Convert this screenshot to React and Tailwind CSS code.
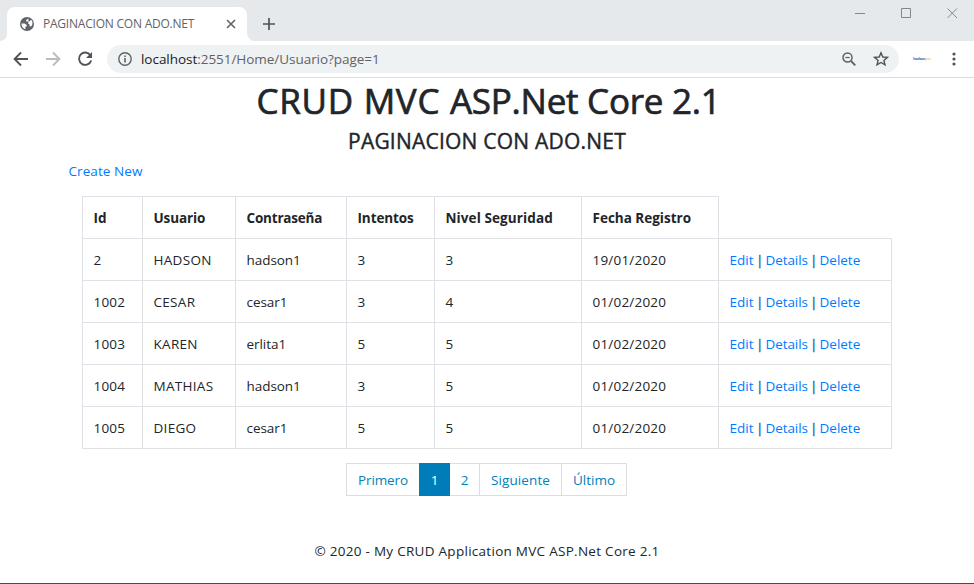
import React from "react";

const users = [
  ["2", "HADSON", "hadson1", "3", "3", "19/01/2020"],
  ["1002", "CESAR", "cesar1", "3", "4", "01/02/2020"],
  ["1003", "KAREN", "erlita1", "5", "5", "01/02/2020"],
  ["1004", "MATHIAS", "hadson1", "3", "5", "01/02/2020"],
  ["1005", "DIEGO", "cesar1", "5", "5", "01/02/2020"],
];

const columns = [
  ["Id", "tracking-[0px]"],
  ["Usuario", "tracking-[-0.1px]"],
  ["Contraseña", "tracking-[-0.2px]"],
  ["Intentos", "tracking-[-0.1px]"],
  ["Nivel Seguridad", "tracking-[0.1px]"],
  ["Fecha Registro", "tracking-[0px]"],
];

const cellTracking = [
  "tracking-[0.2px]",
  "tracking-[0.3px]",
  "tracking-[-0.05px]",
  "",
  "",
  "tracking-[0.2px]",
];

function TabStrip() {
  return (
    <div className="flex h-[41px] items-end bg-[#e5e9ec]">
      <div className="h-2 w-[7px] bg-white">
        <div className="h-full w-full rounded-br-lg bg-[#e5e9ec]" />
      </div>
      <div className="flex h-[34px] w-[240px] items-center rounded-t-lg bg-white pl-[13px] pr-[11px]">
        <svg className="h-[14px] w-[14px] shrink-0" viewBox="0 0 14 14">
          <circle cx="7" cy="7" r="7" fill="#5f6368" />
          <path d="M1.500 6.500h3.200l2 1.600v1.300H5.400v2.900C3 11.800 1.300 9.500 1.500 6.500Z" fill="#fff" />
          <path d="M8.400 1.500 6.200 3v1.600h2.200v1.700H7.600l2 1.300v1.700h1.800c1.700-2 1.500-5-.3-6.500L9.600 4.200H8.400Z" fill="#fff" />
        </svg>
        <span className="ml-[9px] whitespace-nowrap text-[12px] tracking-[-0.22px] text-[#5f6368]">PAGINACION CON ADO.NET</span>
        <svg className="ml-auto h-[10px] w-[10px] shrink-0" viewBox="0 0 10 10" stroke="#5f6368" strokeWidth="1.600">
          <path d="M1 1l8 8M9 1L1 9" />
        </svg>
      </div>
      <div className="h-2 w-2 bg-white">
        <div className="h-full w-full rounded-bl-lg bg-[#e5e9ec]" />
      </div>
      <svg className="mb-[11px] ml-2 h-3 w-3" viewBox="0 0 12 12" stroke="#4f5357" strokeWidth="1.700">
        <path d="M6 0v12M0 6h12" />
      </svg>
      <div className="mb-[22px] ml-auto mr-4 flex items-center gap-[35px]">
        <svg className="h-[11px] w-[11px]" viewBox="0 0 11 11" stroke="#85888b"><path d="M0 5.500h10" /></svg>
        <svg className="h-[11px] w-[11px]" viewBox="0 0 11 11" stroke="#85888b" fill="none"><path d="M.5.5h9v9h-9z" /></svg>
        <svg className="h-[11px] w-[11px]" viewBox="0 0 11 11" stroke="#85888b"><path d="M.5.5l9.500 9.500M10 .5l-9.500 9.500" /></svg>
      </div>
    </div>
  );
}

function Toolbar() {
  return (
    <div className="flex h-[37px] items-center border-b border-[#d9dbdf] bg-white pl-[13px] pr-[18px]">
      <svg className="h-4 w-4" viewBox="0 0 16 16" fill="none" stroke="#505458" strokeWidth="1.900">
        <path d="M15 8H2M8 1.500 1.600 8 8 14.500" />
      </svg>
      <svg className="ml-4 h-4 w-4" viewBox="0 0 16 16" fill="none" stroke="#b9bbbd" strokeWidth="1.900">
        <path d="M1 8h13M8 1.500 14.400 8 8 14.500" />
      </svg>
      <svg className="ml-4 h-4 w-4" viewBox="0 0 16 16">
        <path d="M13.400 4.200A6.200 6.200 0 1 0 14.200 9.500" fill="none" stroke="#505458" strokeWidth="1.900" />
        <path d="M15 1v6H9z" fill="#505458" />
      </svg>
      <div className="ml-[14px] flex h-7 w-[792px] items-center rounded-full bg-[#eff2f3] pl-[11px] pr-[10px]">
        <svg className="h-[14px] w-[14px]" viewBox="0 0 14 14" fill="none" stroke="#5f6368" strokeWidth="1.400">
          <circle cx="7" cy="7" r="6.200" />
          <path d="M7 6v4.500M7 3.500v1.500" strokeWidth="1.600" />
        </svg>
        <span className="mt-px ml-[9px] whitespace-nowrap text-[13.5px] tracking-[-0.04px] text-[#5f6368]">
          <span className="text-[#202124]">localhost</span>:2551/Home/Usuario?page=1
        </span>
        <svg className="ml-auto h-[14px] w-[14px]" viewBox="0 0 14 14" fill="none" stroke="#5f6368" strokeWidth="1.500">
          <circle cx="5.500" cy="5.500" r="4.500" />
          <path d="M9 9l4.300 4.300" strokeWidth="1.900" />
          <path d="M3.300 5.500h4.400" strokeWidth="1.200" />
        </svg>
        <svg className="ml-[17px] h-4 w-4" viewBox="0 0 16 16" fill="none" stroke="#505458" strokeWidth="1.400">
          <path d="M8 1.800 9.800 6l4.600.4-3.500 3 1.100 4.500L8 11.500l-4 2.400 1.100-4.500-3.500-3L6.200 6z" />
        </svg>
      </div>
      <span className="ml-[14px] w-[17px] whitespace-nowrap text-[4px] font-bold leading-none tracking-[-0.4px] text-[#4a6fb5]">hadson<span className="text-[#f3d193]">per</span></span>
      <svg className="ml-auto h-[14px] w-[4px]" viewBox="0 0 4 14" fill="#505458">
        <circle cx="2" cy="2" r="1.600" /><circle cx="2" cy="7" r="1.600" /><circle cx="2" cy="12" r="1.600" />
      </svg>
    </div>
  );
}

function Separator() {
  return <span className="inline-block w-[11.500px] text-center text-[#23719f] [-webkit-text-stroke:0.4px]">|</span>;
}

function UserTable() {
  return (
    <table className="ml-[82px] mt-[14px] w-[810px] table-fixed border-collapse text-left">
      <colgroup>
        <col className="w-[60px]" /><col className="w-[93px]" /><col className="w-[111px]" /><col className="w-[88px]" />
        <col className="w-[147px]" /><col className="w-[137px]" /><col className="w-[173px]" />
      </colgroup>
      <thead>
        <tr className="h-[42px]">
          {columns.map(([name, tracking]) => (
            <th key={name} className={"border border-[#dee2e6] px-[10.5px] pt-[2px] pb-0 font-bold whitespace-nowrap " + tracking}>{name}</th>
          ))}
        </tr>
      </thead>
      <tbody>
        {users.map((row) => (
          <tr key={row[0]} className="h-[42px]">
            {row.map((value, i) => (
              <td key={i} className={"border border-[#dee2e6] px-[10.5px] pt-[2px] pb-0 whitespace-nowrap " + cellTracking[i]}>{value}</td>
            ))}
            <td className="border border-[#dee2e6] px-[10.5px] pt-[2px] pb-0 whitespace-nowrap">
              <div className="flex text-[#007bff]">
                <a className="w-[24.5px]">Edit</a>
                <Separator />
                <a className="w-[42.500px] tracking-[-0.08px]">Details</a>
                <Separator />
                <a>Delete</a>
              </div>
            </td>
          </tr>
        ))}
      </tbody>
    </table>
  );
}

function Pager() {
  const link = "flex h-[33px] items-center justify-center border-y border-r border-[#ddd] pt-[2px] ";
  return (
    <div className="ml-[346px] mt-[14px] flex text-[#0280b9]">
      <a className={link + "w-[73px] border-l border-r-0 tracking-[-0.1px]"}>Primero</a>
      <a className="flex h-[33px] w-[31px] items-center justify-center bg-[#007db8] pt-[2px] text-white">1</a>
      <a className={link + "w-[30px]"}>2</a>
      <a className={link + "w-[82px] tracking-[0.1px]"}>Siguiente</a>
      <a className={link + "w-[65px]"}>Último</a>
    </div>
  );
}

export default function App() {
  return (
    <div className="flex h-[584px] w-[974px] flex-col overflow-hidden bg-white font-['Open_Sans','Noto_Sans',sans-serif]">
      <TabStrip />
      <Toolbar />
      <main className="flex flex-1 flex-col text-[13.5px] leading-[21px] text-[#212529]">
        <h1 className="mt-[2px] pl-[3px] text-center text-[35px] font-medium leading-[42px] tracking-[-0.25px] whitespace-nowrap [-webkit-text-stroke:0.7px]">
          <span className="tracking-[0.7px]">CRUD MVC </span>ASP.Net Core 2.1
        </h1>
        <h2 className="mt-[7px] text-center text-[21px] font-medium leading-[25px] tracking-[0.22px] whitespace-nowrap [-webkit-text-stroke:0.4px]">PAGINACION CON ADO.NET</h2>
        <a className="ml-[68.5px] mt-[7px] self-start tracking-[0.08px] text-[#007bff]">Create New</a>
        <UserTable />
        <Pager />
        <footer className="mt-[45px] text-center tracking-[0.28px]">© 2020 - My CRUD Application MVC ASP.Net Core 2.1</footer>
      </main>
      <div className="h-px bg-[#4b4b4b]" />
    </div>
  );
}
